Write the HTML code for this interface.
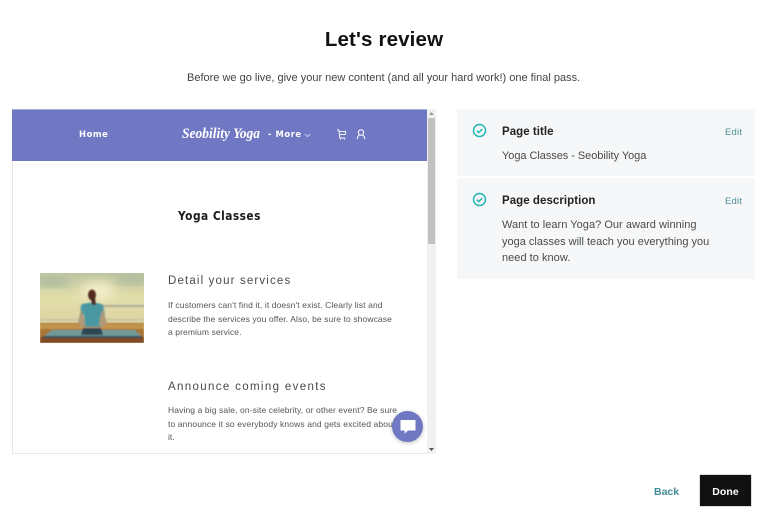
<!DOCTYPE html>
<html lang="en">
<head>
<meta charset="utf-8">
<title>Let's review</title>
<style>
html,body{margin:0;padding:0;background:#fff}
body{position:relative;width:768px;height:515px;overflow:hidden;font-family:"Liberation Sans",sans-serif}
.t{position:absolute;white-space:nowrap;line-height:1}
.b{position:absolute}
</style>
</head>
<body>
<div class="t" style="left:0;width:768px;text-align:center;top:30px;font-size:20.5px;font-weight:700;color:#111;letter-spacing:.15px">Let's review</div>
<div class="t" style="left:187px;top:73px;font-size:11px;color:#444;letter-spacing:0">Before we go live, give your new content (and all your hard work!) one final pass.</div>

<div class="b" style="left:12px;top:109px;width:424px;height:345px;overflow:hidden;background:#fff;box-shadow:inset 0 0 0 1px #e8e8e8">
  <div class="b" style="left:0;top:0;width:415px;height:52px;background:#7078c4;border-top:1px solid #a9aedd;box-sizing:border-box"></div>
  <div class="t" style="left:67px;top:22px;font-size:9px;font-weight:700;color:#fff;letter-spacing:.6px;font-family:'DejaVu Sans',sans-serif;transform-origin:left;transform:scaleX(.93)">Home</div>
  <div class="t" style="left:170px;top:18px;font-size:14.5px;font-weight:700;font-style:italic;color:#fff;font-family:'Liberation Serif',serif;transform-origin:left;transform:scaleX(.93)">Seobility Yoga</div>
  <div class="t" style="left:256px;top:22px;font-size:9px;font-weight:700;color:#fff;letter-spacing:.6px;font-family:'DejaVu Sans',sans-serif;transform-origin:left;transform:scaleX(.93)">- More</div>
  <svg class="b" style="left:292px;top:24px" width="7" height="5" viewBox="0 0 7 5"><path d="M.7 1l2.8 2.6L6.3 1" fill="none" stroke="#d9dbf1" stroke-width=".8"/></svg>
  <svg class="b" style="left:324px;top:20px" width="11" height="11" viewBox="0 0 11 11" fill="none" stroke="#fff" stroke-width=".9"><path d="M1 1h1.8l1 8h5.4M3 2.6h6.6l-.3 3H3.4"/><path d="M4 10.2h1M8 10.2h1"/></svg>
  <svg class="b" style="left:344px;top:20px" width="10" height="11" viewBox="0 0 10 11" fill="none" stroke="#fff" stroke-width="1"><circle cx="5" cy="3.5" r="2.7"/><path d="M1.2 10.2c.3-2.6 1.5-4 2.6-4.4M8.8 10.2c-.3-2.6-1.5-4-2.6-4.4"/></svg>

  <div class="t" style="left:166px;top:101px;font-size:12.5px;font-weight:700;color:#1c1c1c;letter-spacing:.55px;font-family:'DejaVu Sans',sans-serif;transform-origin:left;transform:scaleX(.85)">Yoga Classes</div>

  <svg class="b" style="left:28px;top:164px" width="104" height="70" viewBox="0 0 104 70" preserveAspectRatio="none">
    <defs>
      <linearGradient id="s" x1="0" y1="0" x2="0" y2="1"><stop offset="0" stop-color="#bcc4a2"/><stop offset=".35" stop-color="#e3dea9"/><stop offset=".7" stop-color="#dcd4a4"/><stop offset="1" stop-color="#d8cf9f"/></linearGradient>
      <filter id="f" x="-5%" y="-5%" width="110%" height="110%"><feGaussianBlur stdDeviation=".7"/></filter>
      <filter id="f2" x="-30%" y="-30%" width="160%" height="160%"><feGaussianBlur stdDeviation="5"/></filter>
      <clipPath id="c"><rect width="104" height="70"/></clipPath>
    </defs>
    <g clip-path="url(#c)">
      <rect width="104" height="70" fill="url(#s)"/>
      <ellipse cx="58" cy="18" rx="17" ry="9" fill="#f3eecb" filter="url(#f2)"/>
      <ellipse cx="12" cy="9" rx="18" ry="4" fill="#a3b699" filter="url(#f2)"/>
      <ellipse cx="92" cy="7" rx="16" ry="4" fill="#a6b89c" filter="url(#f2)"/>
      <g filter="url(#f)">
        <rect x="62" y="32" width="42" height="2" fill="#aeae97"/>
        <rect x="0" y="46" width="104" height="1.5" fill="#c5c19e"/>
        <rect x="0" y="50" width="104" height="20" fill="#a87436"/>
        <rect x="0" y="51" width="104" height="5" fill="#c2934e"/>
        <rect x="0" y="64" width="104" height="6" fill="#804c22"/>
        <path d="M3 64L12 57h83l7 7z" fill="#6f9a97"/>
        <rect x="3" y="63" width="99" height="1.8" fill="#25505f"/>
        <path d="M41 32c4-3 18-3 22 0l2 9-4 1 0 12H45l-1-12-4-1z" fill="#4a98a1"/>
        <path d="M41 36l-3 14 4 5 3-3-1-7zM63 36l4 14-5 5-3-3 1-7z" fill="#b09879"/>
        <path d="M43 55h18l2 7H41z" fill="#2b4453"/>
        <ellipse cx="52" cy="22" rx="4" ry="5.5" fill="#55291f"/>
        <path d="M51 25h4l1 7h-4z" fill="#4a2a20"/>
      </g>
    </g>
  </svg>

  <div class="t" style="left:156px;top:167px;font-size:11.5px;color:#4a4a4a;letter-spacing:1.15px">Detail your services</div>
  <div class="t" style="left:156px;top:192px;font-size:8.5px;color:#555;letter-spacing:.11px">If customers can't find it, it doesn't exist. Clearly list and</div>
  <div class="t" style="left:156px;top:206px;font-size:8.5px;color:#555;letter-spacing:.1px">describe the services you offer. Also, be sure to showcase</div>
  <div class="t" style="left:156px;top:219px;font-size:8.5px;color:#555;letter-spacing:.1px">a premium service.</div>

  <div class="t" style="left:156px;top:273px;font-size:11.5px;color:#4a4a4a;letter-spacing:1.35px">Announce coming events</div>
  <div class="t" style="left:156px;top:297px;font-size:8.5px;color:#555;letter-spacing:.11px">Having a big sale, on-site celebrity, or other event? Be sure</div>
  <div class="t" style="left:156px;top:311px;font-size:8.5px;color:#555;letter-spacing:.12px">to announce it so everybody knows and gets excited about</div>
  <div class="t" style="left:156px;top:324px;font-size:8.5px;color:#555">it.</div>

  <div class="b" style="left:415px;top:0;width:9px;height:345px;background:#f1f1f1"></div>
  <div class="b" style="left:416px;top:9px;width:7px;height:126px;background:#c1c1c1"></div>
  <svg class="b" style="left:416px;top:2px" width="7" height="5" viewBox="0 0 7 5"><path d="M3.5 1L6 4H1z" fill="#9a9a9a"/></svg>
  <svg class="b" style="left:416px;top:338px" width="7" height="5" viewBox="0 0 7 5"><path d="M3.5 4L6 1H1z" fill="#505050"/></svg>

  <div class="b" style="left:380px;top:302px;width:31px;height:31px;border-radius:50%;background:#7078c4;box-shadow:0 1px 4px rgba(0,0,0,.25)"></div>
  <svg class="b" style="left:388px;top:311px" width="16" height="15" viewBox="0 0 16 15"><path d="M.5 0h15v10.5H8L4.6 13.8v-3.3H.5z" fill="#fff"/></svg>
</div>

<div class="b" style="left:457px;top:109px;width:298px;height:67px;background:#f5f7f8"></div>
<div class="b" style="left:457px;top:178px;width:298px;height:101px;background:#f5f7f8"></div>

<svg class="b" style="left:472px;top:123px" width="15" height="15" viewBox="0 0 15 15" fill="none" stroke="#1bb3b3" stroke-width="1.4"><circle cx="7.5" cy="7.5" r="6"/><path d="M4.8 7.6l2 2 3.5-3.6"/></svg>
<svg class="b" style="left:472px;top:192px" width="15" height="15" viewBox="0 0 15 15" fill="none" stroke="#1bb3b3" stroke-width="1.4"><circle cx="7.5" cy="7.5" r="6"/><path d="M4.8 7.6l2 2 3.5-3.6"/></svg>

<div class="t" style="left:502px;top:127px;font-size:11.5px;font-weight:700;color:#222;letter-spacing:.05px">Page title</div>
<div class="t" style="left:725px;top:128px;font-size:9.5px;color:#4f8f96;letter-spacing:.2px">Edit</div>
<div class="t" style="left:502px;top:151px;font-size:11px;color:#4b4b4b;letter-spacing:-.05px">Yoga Classes - Seobility Yoga</div>

<div class="t" style="left:502px;top:196px;font-size:11.5px;font-weight:700;color:#222;letter-spacing:.05px">Page description</div>
<div class="t" style="left:725px;top:197px;font-size:9.5px;color:#4f8f96;letter-spacing:.2px">Edit</div>
<div class="t" style="left:502px;top:220px;font-size:11px;color:#4b4b4b;letter-spacing:.03px">Want to learn Yoga? Our award winning</div>
<div class="t" style="left:502px;top:237px;font-size:11px;color:#4b4b4b;letter-spacing:0">yoga classes will teach you everything you</div>
<div class="t" style="left:502px;top:253px;font-size:11px;color:#4b4b4b;letter-spacing:.03px">need to know.</div>

<div class="t" style="left:654px;top:487px;font-size:10.5px;font-weight:700;color:#3f8b93;letter-spacing:0">Back</div>
<div class="b" style="left:700px;top:475px;width:51px;height:31px;background:#111;box-shadow:0 0 0 .5px #bbb"></div>
<div class="t" style="left:700px;width:51px;text-align:center;top:487px;font-size:10.5px;font-weight:700;color:#fff;letter-spacing:.05px">Done</div>
</body>
</html>
